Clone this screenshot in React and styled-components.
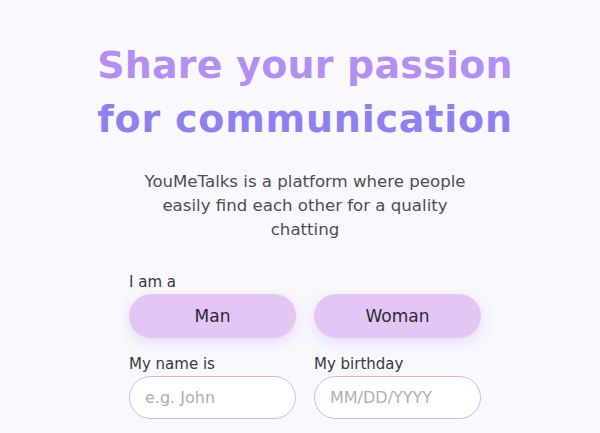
import styled, { createGlobalStyle } from "styled-components";

const GlobalStyle = createGlobalStyle`
  html, body {
    margin: 0;
    padding: 0;
    background: #f9f8fe;
  }
  body {
    font-family: "DejaVu Sans", "Noto Sans", sans-serif;
  }
`;

export default function App() {
  return (
    <>
      <GlobalStyle />
      <STPage>
        <STTitle>
          <STLine $color="#b48ff3">Share your passion</STLine>
          <STLine $color="#8f7ff0" $wide>for communication</STLine>
        </STTitle>
        <STSubtitle>
          YouMeTalks is a platform where people
          <br />
          easily find each other for a quality
          <br />
          chatting
        </STSubtitle>
        <STForm>
          <STField>
            <STLabel>I am a</STLabel>
            <STRow>
              <STChoice type="button">Man</STChoice>
              <STChoice type="button">Woman</STChoice>
            </STRow>
          </STField>
          <STRow>
            <STField>
              <STLabel>My name is</STLabel>
              <STInput placeholder="e.g. John" />
            </STField>
            <STField>
              <STLabel>My birthday</STLabel>
              <STInput placeholder="MM/DD/YYYY" />
            </STField>
          </STRow>
        </STForm>
      </STPage>
    </>
  );
}

const STPage = styled.div`
  display: flex;
  flex-direction: column;
  align-items: center;
  padding: 38px 0 0 10px;
  height: 433px;
  box-sizing: border-box;
  overflow: hidden;
`;

const STTitle = styled.h1`
  margin: 0;
  display: flex;
  flex-direction: column;
  align-items: center;
  font-size: 38px;
  line-height: 54px;
  font-weight: 700;
  letter-spacing: 0.2px;
`;

const STLine = styled.span`
  color: ${(p) => p.$color};
  letter-spacing: ${(p) => (p.$wide ? "0.8px" : "0.2px")};
`;

const STSubtitle = styled.p`
  margin: 24px 0 0;
  text-align: center;
  font-size: 16.6px;
  line-height: 24px;
  color: #4e4e52;
`;

const STForm = styled.div`
  margin-top: 31px;
  width: 352px;
  display: flex;
  flex-direction: column;
  gap: 17px;
`;

const STRow = styled.div`
  display: flex;
  gap: 18px;
`;

const STField = styled.div`
  display: flex;
  flex-direction: column;
  flex: 1;
  gap: 3px;
`;

const STLabel = styled.span`
  font-size: 15px;
  line-height: 18px;
  color: #3a3a3e;
`;

const STChoice = styled.button`
  flex: 1;
  height: 44px;
  border: none;
  border-radius: 22px;
  background: #e2c6f4;
  box-shadow: 0 4px 14px rgba(200, 160, 240, 0.35);
  font-family: inherit;
  font-size: 17px;
  color: #2e2a33;
  cursor: pointer;
`;

const STInput = styled.input`
  height: 43px;
  box-sizing: border-box;
  border: 1px solid #dab2e6;
  border-radius: 22px;
  background: #fff;
  padding: 0 15px;
  font-family: inherit;
  font-size: 16px;
  color: #333;
  outline: none;
  width: 100%;
  &::placeholder {
    color: #b0b0b4;
  }
`;
